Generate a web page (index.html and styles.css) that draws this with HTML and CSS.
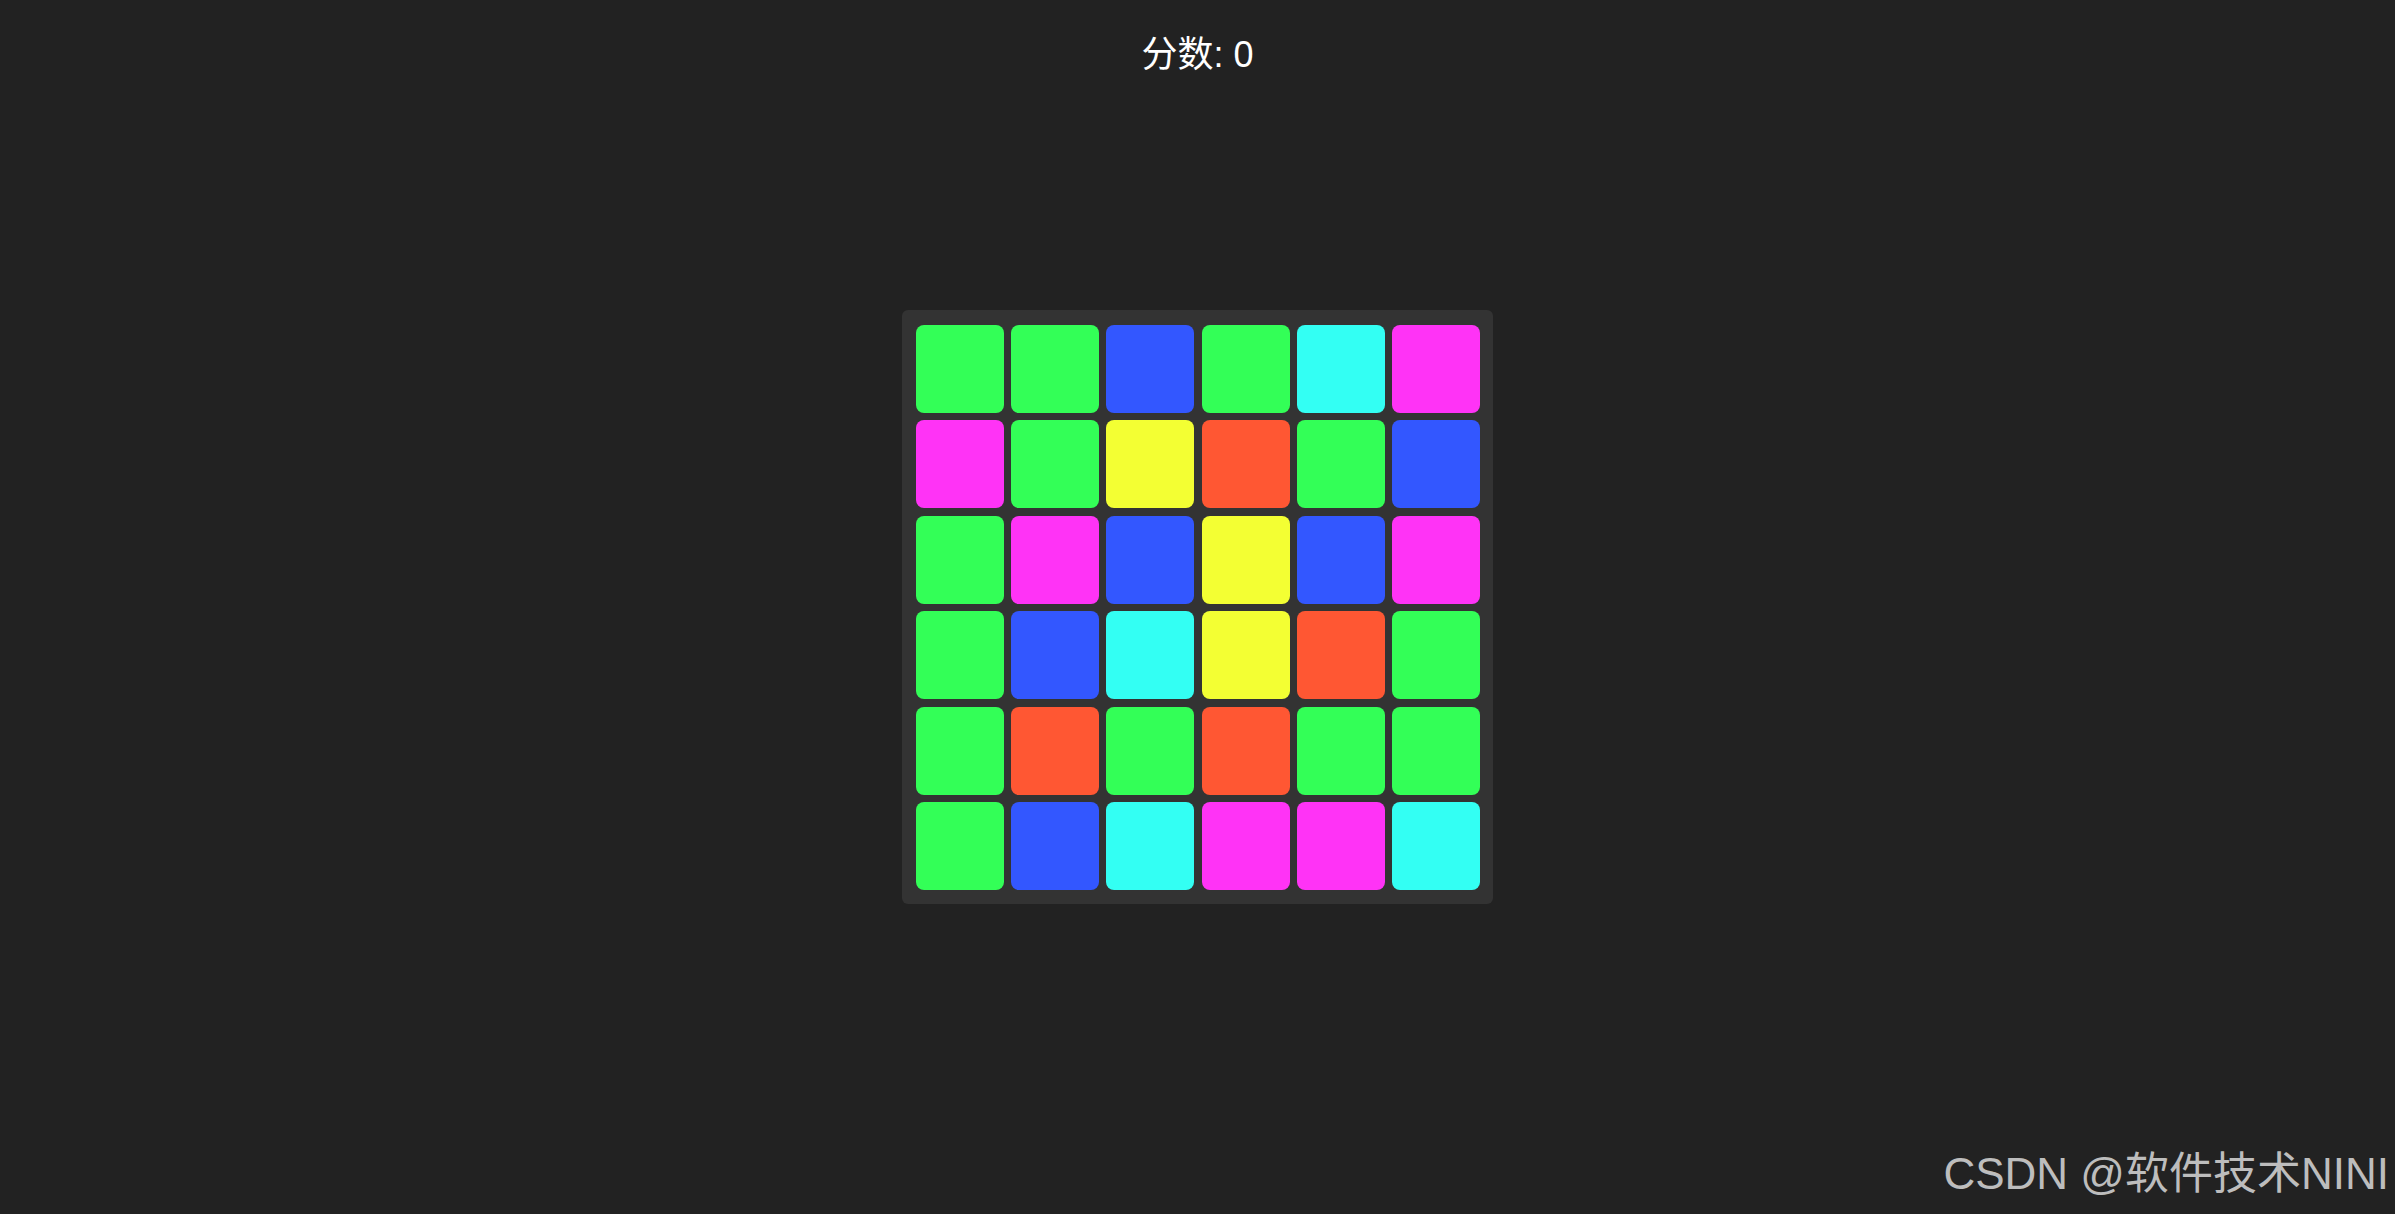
FILE: index.html
```html
<!DOCTYPE html>
<html lang="zh">
<head>
<meta charset="utf-8">
<title>消除游戏</title>
<link rel="stylesheet" href="styles.css">
</head>
<body>
<div class="page">
  <div class="score">分数: <span>0</span></div>
  <div class="board">
    <div class="tile g"></div><div class="tile g"></div><div class="tile b"></div><div class="tile g"></div><div class="tile c"></div><div class="tile m"></div>
    <div class="tile m"></div><div class="tile g"></div><div class="tile y"></div><div class="tile r"></div><div class="tile g"></div><div class="tile b"></div>
    <div class="tile g"></div><div class="tile m"></div><div class="tile b"></div><div class="tile y"></div><div class="tile b"></div><div class="tile m"></div>
    <div class="tile g"></div><div class="tile b"></div><div class="tile c"></div><div class="tile y"></div><div class="tile r"></div><div class="tile g"></div>
    <div class="tile g"></div><div class="tile r"></div><div class="tile g"></div><div class="tile r"></div><div class="tile g"></div><div class="tile g"></div>
    <div class="tile g"></div><div class="tile b"></div><div class="tile c"></div><div class="tile m"></div><div class="tile m"></div><div class="tile c"></div>
  </div>
  <div class="spacer"></div>
</div>
<div class="watermark">CSDN @软件技术NINI</div>
</body>
</html>
```
FILE: styles.css
```css
html, body {
  margin: 0;
  padding: 0;
  height: 100%;
  background: #222222;
  overflow: hidden;
}
body {
  font-family: "Liberation Sans", Arial, "Noto Sans CJK SC", sans-serif;
}
.page {
  height: 100vh;
  display: grid;
  grid-template-rows: 1fr auto 1fr;
  justify-items: center;
}
.score {
  align-self: start;
  padding-top: 33px;
  color: #ffffff;
  font-size: 36px;
  line-height: 43px;
}
.board {
  display: grid;
  grid-template-columns: repeat(6, 88px);
  grid-auto-rows: 88px;
  gap: 7.4px;
  padding: 15px 13px 14px 14px;
  background: #333333;
  border-radius: 6px;
}
.tile {
  border-radius: 8px;
}
.g { background: #33ff57; }
.b { background: #3357ff; }
.c { background: #33fff3; }
.m { background: #ff33f6; }
.y { background: #f3ff33; }
.r { background: #ff5733; }
.watermark {
  position: absolute;
  right: 6px;
  bottom: 14px;
  color: #bdbdbd;
  font-size: 44px;
  line-height: 52px;
  white-space: nowrap;
}
```
